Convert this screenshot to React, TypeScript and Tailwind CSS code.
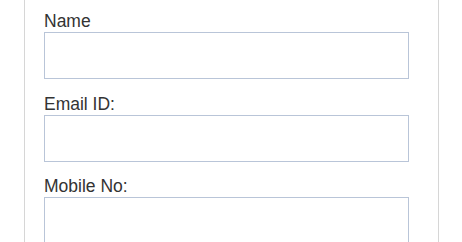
const FIELDS = [
  { id: "name", label: "Name", type: "text", gap: "mb-[14px]" },
  { id: "email", label: "Email ID:", type: "email", gap: "mb-[13px]" },
  { id: "mobile", label: "Mobile No:", type: "tel", gap: "mb-[13px]" },
];

export default function App() {
  return (
    <div className="h-[242px] w-[462px] overflow-hidden bg-white" style={{ fontFamily: '"Liberation Sans", Arial, sans-serif' }}>
      <div className="ml-[24px] h-full w-[415px] border-x border-[#d6d6d6] pl-[19px] pt-[10px]">
        {FIELDS.map((f) => (
          <div key={f.id} className={f.gap}>
            <label htmlFor={f.id} className="block text-[17.5px] leading-[22px] text-[#333333]">
              {f.label}
            </label>
            <input
              id={f.id}
              type={f.type}
              className="block h-[47px] w-[365px] border border-[#b9c5d8] bg-white px-3 text-[16px] text-[#333333] outline-none"
            />
          </div>
        ))}
      </div>
    </div>
  );
}
